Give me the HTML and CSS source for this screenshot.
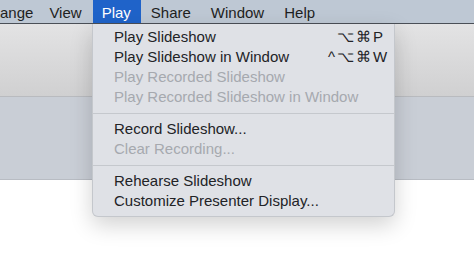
FILE: index.html
```html
<!DOCTYPE html>
<html lang="en">
<head>
    <meta charset="UTF-8">
    <meta name="viewport" content="width=device-width, initial-scale=1.0">
    <title>Play menu</title>
    <link rel="stylesheet" href="styles.css">
</head>
<body>
    <div class="screen">
        <nav class="menubar">
            <span class="menubar-item first">ange</span>
            <span class="menubar-item">View</span>
            <span class="menubar-item active">Play</span>
            <span class="menubar-item">Share</span>
            <span class="menubar-item">Window</span>
            <span class="menubar-item">Help</span>
        </nav>

        <div class="window">
            <div class="toolbar"></div>
            <div class="strip"></div>
        </div>

        <div class="menu">
            <div class="menu-item">
                <span>Play Slideshow</span>
                <span class="shortcut"><span class="mods">⌥⌘</span><span class="key">P</span></span>
            </div>
            <div class="menu-item">
                <span>Play Slideshow in Window</span>
                <span class="shortcut"><span class="mods">^⌥⌘</span><span class="key">W</span></span>
            </div>
            <div class="menu-item disabled">Play Recorded Slideshow</div>
            <div class="menu-item disabled">Play Recorded Slideshow in Window</div>
            <div class="separator"></div>
            <div class="menu-item">Record Slideshow...</div>
            <div class="menu-item disabled">Clear Recording...</div>
            <div class="separator"></div>
            <div class="menu-item">Rehearse Slideshow</div>
            <div class="menu-item">Customize Presenter Display...</div>
        </div>
    </div>
</body>
</html>
```
FILE: styles.css
```css
* {
    box-sizing: border-box;
}

body {
    margin: 0;
    padding: 0;
    background: #ffffff;
    font-family: 'Liberation Sans', Arial, sans-serif;
}

.screen {
    position: relative;
    width: 474px;
    height: 270px;
    overflow: hidden;
}

.menubar {
    display: flex;
    height: 24px;
    background: #bec8d4;
    border-bottom: 1px solid #4a4f57;
    font-size: 15px;
    color: #1e1f22;
}

.menubar-item {
    padding: 3px 10px 0 10px;
    line-height: 20px;
}

.menubar-item.first {
    padding: 3px 6px 0 0;
}

.menubar-item.active {
    background: #1f63c9;
    color: #ffffff;
    margin-left: 1px;
    padding-left: 9px;
}

.window {
    display: flex;
    flex-direction: column;
}

.toolbar {
    height: 73px;
    background: linear-gradient(to bottom, #e3e3e4, #d0d0d1);
    border-bottom: 1px solid #b9bbbf;
}

.strip {
    height: 83px;
    background: #c9ced6;
    border-bottom: 1px solid #b8bcc3;
}

.menu {
    position: absolute;
    left: 92px;
    top: 24px;
    width: 303px;
    padding: 3px 0 5px;
    background: #dfe1e6;
    border: 1px solid #c4c7cc;
    border-top: none;
    border-radius: 0 0 6px 6px;
    box-shadow: 0 8px 22px rgba(0, 0, 0, 0.18);
    font-size: 15px;
    color: #222326;
}

.menu-item {
    display: flex;
    justify-content: space-between;
    height: 20px;
    line-height: 20px;
    padding: 0 3px 0 21px;
}

.menu-item.disabled {
    color: #a6a9af;
}

.shortcut {
    display: flex;
}

.mods {
    letter-spacing: 2px;
}

.key {
    width: 18px;
}

.separator {
    height: 1px;
    margin: 6px 0 5px;
    background: #c5c8cd;
}
```
